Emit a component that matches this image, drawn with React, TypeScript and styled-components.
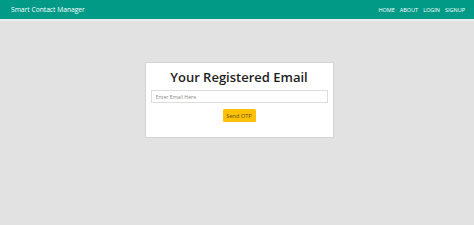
import React from 'react';
import styled, { createGlobalStyle } from 'styled-components';

const GlobalStyle = createGlobalStyle`
  html, body {
    margin: 0;
    padding: 0;
    height: 100%;
  }
  body {
    background: #e2e2e2;
    font-family: "Open Sans", "Noto Sans", sans-serif;
  }
  #root {
    height: 100%;
  }
`;

const Page = styled.div`
  min-height: 100%;
  display: flex;
  flex-direction: column;
`;

const Navbar = styled.nav`
  height: 19px;
  background: #009a87;
  display: flex;
  align-items: center;
  justify-content: space-between;
  padding: 0 9px 0 11px;
  border-bottom: 2px solid #ececec;
`;

const Brand = styled.span`
  color: #ffffff;
  font-size: 6.7px;
`;

const NavLinks = styled.ul`
  display: flex;
  gap: 5px;
  list-style: none;
  margin: 0;
  padding: 0;
`;

const NavLink = styled.li`
  color: #ffffff;
  font-size: 5.5px;
`;

const Main = styled.main`
  flex: 1;
  display: flex;
  justify-content: center;
  padding: 41px 0 0 4px;
`;

const Card = styled.div`
  width: 189px;
  height: 76px;
  box-sizing: border-box;
  background: #ffffff;
  border: 1px solid #d4d4d4;
  padding: 4px 5px 0;
  display: flex;
  flex-direction: column;
  align-items: center;
`;

const Title = styled.h1`
  margin: 0;
  font-size: 13px;
  font-weight: 600;
  color: #1e1e1e;
  line-height: 20px;
`;

const EmailInput = styled.input`
  margin-top: 3px;
  width: 100%;
  height: 13px;
  box-sizing: border-box;
  border: 1px solid #dcdcdc;
  padding: 0 4px;
  font-family: inherit;
  font-size: 5.2px;
  &::placeholder {
    color: #8a8a8a;
  }
`;

const SendButton = styled.button`
  margin-top: 6px;
  width: 33px;
  height: 13px;
  background: #ffc107;
  border: none;
  border-radius: 1.5px;
  color: #5a4a10;
  font-family: inherit;
  font-size: 5.6px;
  padding: 0;
`;

export default function App() {
  return (
    <>
      <GlobalStyle />
      <Page>
        <Navbar>
          <Brand>Smart Contact Manager</Brand>
          <NavLinks>
            <NavLink>HOME</NavLink>
            <NavLink>ABOUT</NavLink>
            <NavLink>LOGIN</NavLink>
            <NavLink>SIGNUP</NavLink>
          </NavLinks>
        </Navbar>
        <Main>
          <Card>
            <Title>Your Registered Email</Title>
            <EmailInput placeholder="Enter Email Here" />
            <SendButton>Send OTP</SendButton>
          </Card>
        </Main>
      </Page>
    </>
  );
}
